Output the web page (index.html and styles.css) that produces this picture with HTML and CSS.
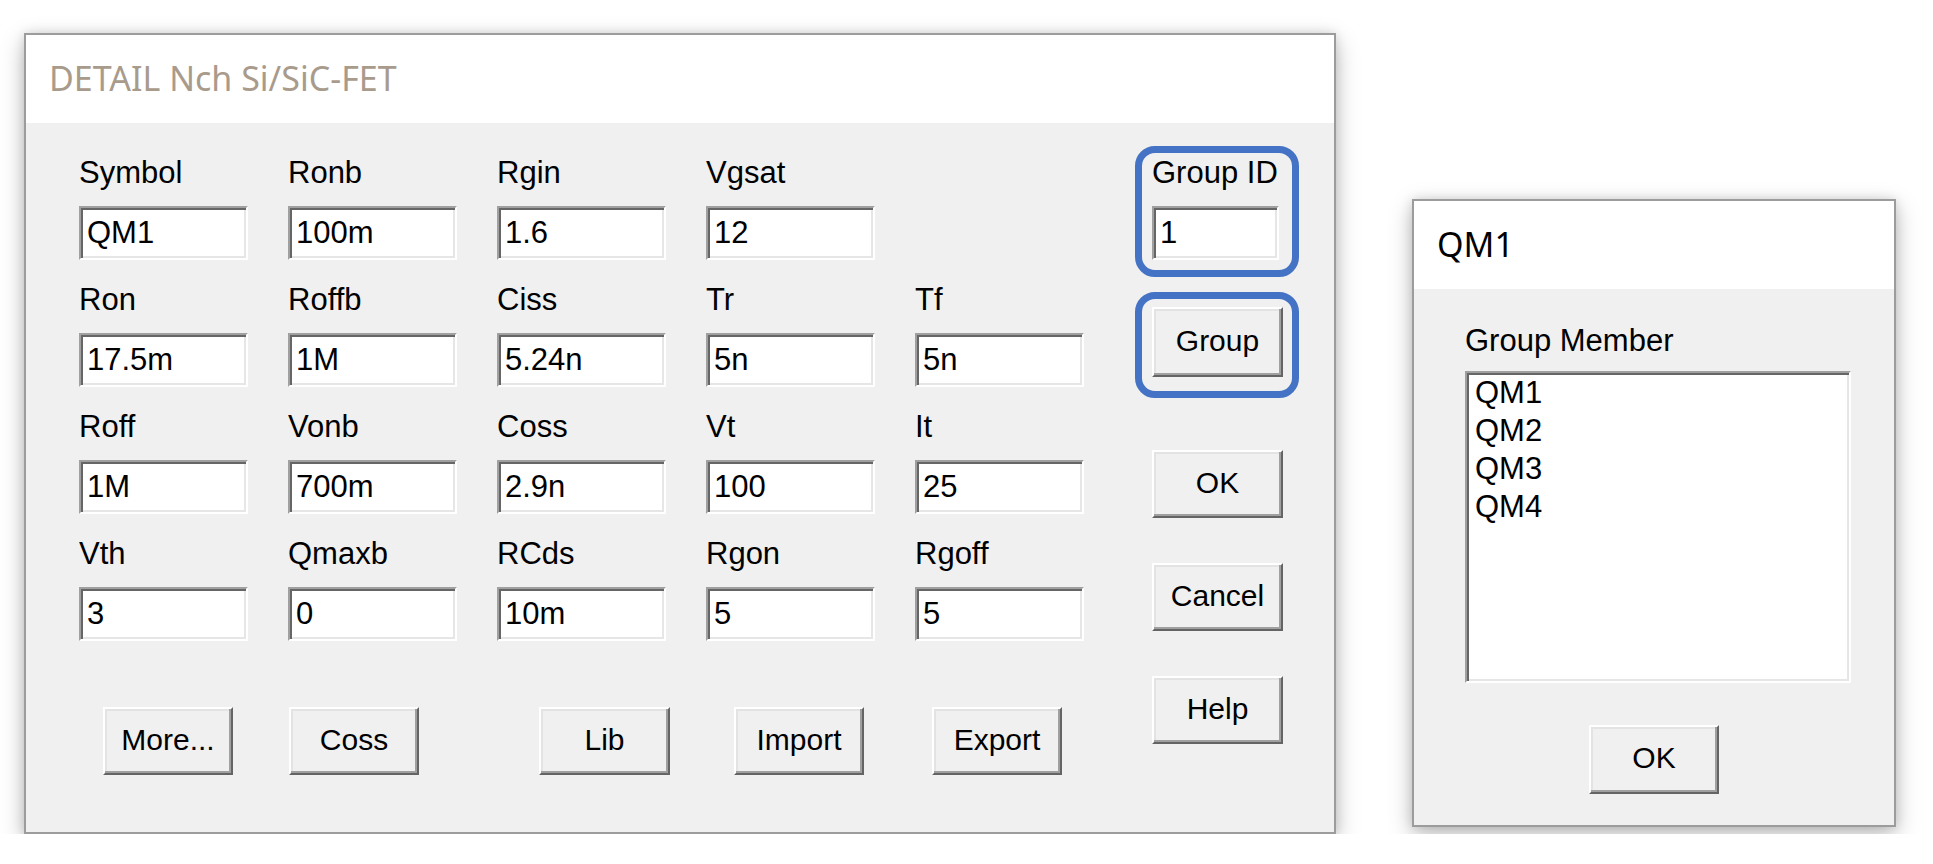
FILE: index.html
```html
<!DOCTYPE html>
<html lang="en">
<head>
  <meta charset="UTF-8" />
  <title>DETAIL Nch Si/SiC-FET</title>
  <link rel="stylesheet" href="styles.css">
</head>
<body>
  <div class="desk">

    <div class="dlg dlg-main">
      <div class="caption inactive">DETAIL Nch Si/SiC-FET</div>
      <div class="dlg-body">
        <div class="params">
          <div class="fields">
            <div class="field"><div class="lbl">Symbol</div><div class="edit">QM1</div></div>
            <div class="field"><div class="lbl">Ronb</div><div class="edit">100m</div></div>
            <div class="field"><div class="lbl">Rgin</div><div class="edit">1.6</div></div>
            <div class="field"><div class="lbl">Vgsat</div><div class="edit">12</div></div>
            <div class="field"></div>

            <div class="field"><div class="lbl">Ron</div><div class="edit">17.5m</div></div>
            <div class="field"><div class="lbl">Roffb</div><div class="edit">1M</div></div>
            <div class="field"><div class="lbl">Ciss</div><div class="edit">5.24n</div></div>
            <div class="field"><div class="lbl">Tr</div><div class="edit">5n</div></div>
            <div class="field"><div class="lbl">Tf</div><div class="edit">5n</div></div>

            <div class="field"><div class="lbl">Roff</div><div class="edit">1M</div></div>
            <div class="field"><div class="lbl">Vonb</div><div class="edit">700m</div></div>
            <div class="field"><div class="lbl">Coss</div><div class="edit">2.9n</div></div>
            <div class="field"><div class="lbl">Vt</div><div class="edit">100</div></div>
            <div class="field"><div class="lbl">It</div><div class="edit">25</div></div>

            <div class="field"><div class="lbl">Vth</div><div class="edit">3</div></div>
            <div class="field"><div class="lbl">Qmaxb</div><div class="edit">0</div></div>
            <div class="field"><div class="lbl">RCds</div><div class="edit">10m</div></div>
            <div class="field"><div class="lbl">Rgon</div><div class="edit">5</div></div>
            <div class="field"><div class="lbl">Rgoff</div><div class="edit">5</div></div>
          </div>

          <div class="cmds">
            <div class="btn cmd-more">More...</div>
            <div class="btn cmd-coss">Coss</div>
            <div class="btn cmd-lib">Lib</div>
            <div class="btn cmd-import">Import</div>
            <div class="btn cmd-export">Export</div>
          </div>
        </div>

        <div class="side">
          <div class="mark mark-id">
            <div class="lbl">Group ID</div>
            <div class="edit edit-id">1</div>
          </div>
          <div class="mark mark-grp">
            <div class="btn btn-grp">Group</div>
          </div>
          <div class="btn side-ok">OK</div>
          <div class="btn side-btn">Cancel</div>
          <div class="btn side-btn">Help</div>
        </div>
      </div>
    </div>

    <div class="dlg dlg-group">
      <div class="caption">QM1</div>
      <div class="dlg-body group-body">
        <div class="lbl">Group Member</div>
        <div class="listbox">
          <div class="item">QM1</div>
          <div class="item">QM2</div>
          <div class="item">QM3</div>
          <div class="item">QM4</div>
        </div>
        <div class="btn group-ok">OK</div>
      </div>
    </div>

  </div>
</body>
</html>
```

FILE: styles.css
```css
html, body {
  margin: 0;
  padding: 0;
  background: #ffffff;
}

body {
  font-family: "Liberation Sans", Arial, sans-serif;
  font-size: 31px;
  line-height: 36px;
  color: #000;
}

.desk {
  display: flex;
  align-items: flex-start;
  padding: 33px 0 0 24px;
  gap: 76px;
}

/* window frame */
.dlg {
  box-sizing: border-box;
  display: flex;
  flex-direction: column;
  background: #f0f0f0;
  border: 2px solid #9c9c9c;
  box-shadow: 0 8px 22px rgba(0, 0, 0, 0.26), 0 0 10px rgba(0, 0, 0, 0.12);
}

.dlg-main {
  width: 1312px;
  height: 801px;
}

.dlg-group {
  width: 484px;
  height: 628px;
  margin-top: 166px;
}

.caption {
  box-sizing: border-box;
  height: 88px;
  padding: 23px 0 0 23px;
  background: #fff;
  font-family: "Noto Sans", "Open Sans", sans-serif;
  font-size: 34px;
  line-height: 40px;
  color: #000;
}

.caption.inactive {
  color: #a99b8c;
}

.dlg-body {
  flex: 1;
  display: flex;
  padding-left: 53px;
}

/* parameter fields */
.params {
  width: 1005px;
  padding-top: 32px;
}

.fields {
  display: grid;
  grid-template-columns: repeat(5, 169px);
  column-gap: 40px;
  row-gap: 22px;
}

.field {
  display: flex;
  flex-direction: column;
  gap: 15px;
  min-height: 105px;
}

.lbl {
  height: 36px;
  white-space: nowrap;
}

.edit {
  box-sizing: border-box;
  height: 54px;
  padding: 7px 6px 0;
  background: #fff;
  border: 2px solid;
  border-color: #a0a0a0 #fff #fff #a0a0a0;
  box-shadow: inset 2px 2px 0 #666, inset -2px -2px 0 #e6e6e6;
  white-space: nowrap;
  overflow: hidden;
}

/* push buttons */
.btn {
  box-sizing: border-box;
  display: flex;
  align-items: center;
  justify-content: center;
  width: 130px;
  height: 68px;
  padding-bottom: 3px;
  background: #f0f0f0;
  border: 2px solid;
  border-color: #fff #646464 #646464 #fff;
  box-shadow: inset -2px -2px 0 #a0a0a0, inset 2px 2px 0 #e3e3e3;
  font-size: 30px;
}

.cmds {
  display: flex;
  margin-top: 66px;
}

.cmd-more { margin-left: 24px; }
.cmd-coss { margin-left: 56px; }
.cmd-lib { margin-left: 120px; width: 131px; }
.cmd-import { margin-left: 64px; }
.cmd-export { margin-left: 68px; }

/* right column */
.side {
  display: flex;
  flex-direction: column;
  align-items: flex-start;
  margin-left: 51px;
  padding-top: 23px;
}

.mark {
  box-sizing: border-box;
  width: 164px;
  border: 7px solid #4472c4;
  border-radius: 20px;
}

.mark-id {
  padding: 2px 13px 10px 10px;
  display: flex;
  flex-direction: column;
  gap: 15px;
}

.edit-id {
  width: 127px;
}

.mark-grp {
  margin-top: 15px;
  padding: 8px 0 14px 10px;
}

.btn-grp {
  width: 131px;
  height: 70px;
}

.side-ok {
  width: 131px;
  margin: 52px 0 0 17px;
}

.side-btn {
  width: 131px;
  margin: 45px 0 0 17px;
}

/* group member window */
.group-body {
  flex-direction: column;
  align-items: flex-start;
  padding: 34px 0 0 51px;
}

.listbox {
  box-sizing: border-box;
  width: 386px;
  height: 312px;
  margin-top: 12px;
  padding: 1px 8px;
  background: #fff;
  border: 2px solid;
  border-color: #a0a0a0 #fff #fff #a0a0a0;
  box-shadow: inset 2px 2px 0 #666, inset -2px -2px 0 #e6e6e6;
}

.item {
  line-height: 38px;
}

.group-ok {
  height: 69px;
  margin: 42px 0 0 124px;
}
```
